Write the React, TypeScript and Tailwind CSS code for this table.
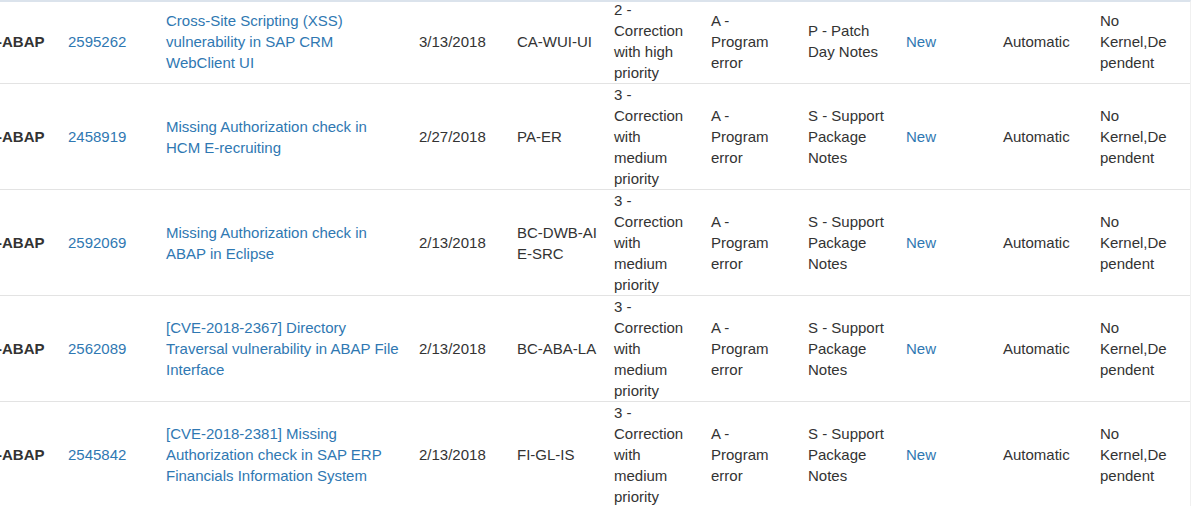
import React from "react";

type Note = {
  id: string;
  title: string;
  date: string;
  component: string;
  priority: string;
  category: string;
  type: string;
};

const notes: Note[] = [
  {
    id: "2595262",
    title: "Cross-Site Scripting (XSS) vulnerability in SAP CRM WebClient UI",
    date: "3/13/2018",
    component: "CA-WUI-UI",
    priority: "2 - Correction with high priority",
    category: "A - Program error",
    type: "P - Patch Day Notes",
  },
  {
    id: "2458919",
    title: "Missing Authorization check in HCM E-recruiting",
    date: "2/27/2018",
    component: "PA-ER",
    priority: "3 - Correction with medium priority",
    category: "A - Program error",
    type: "S - Support Package Notes",
  },
  {
    id: "2592069",
    title: "Missing Authorization check in ABAP in Eclipse",
    date: "2/13/2018",
    component: "BC-DWB-AIE-SRC",
    priority: "3 - Correction with medium priority",
    category: "A - Program error",
    type: "S - Support Package Notes",
  },
  {
    id: "2562089",
    title: "[CVE-2018-2367] Directory Traversal vulnerability in ABAP File Interface",
    date: "2/13/2018",
    component: "BC-ABA-LA",
    priority: "3 - Correction with medium priority",
    category: "A - Program error",
    type: "S - Support Package Notes",
  },
  {
    id: "2545842",
    title: "[CVE-2018-2381] Missing Authorization check in SAP ERP Financials Information System",
    date: "2/13/2018",
    component: "FI-GL-IS",
    priority: "3 - Correction with medium priority",
    category: "A - Program error",
    type: "S - Support Package Notes",
  },
];

export default function App() {
  return (
    <div className="w-[1200px] h-[506px] overflow-hidden bg-white">
      <div className="w-[1191px] h-[506px] border-t-2 border-r border-t-[#dbe3ec] border-r-[#f0f0f0]">
        <table
          className="table-fixed border-collapse -mt-[3px] -ml-[3px] w-[1193px] text-[15px] leading-[21px] text-[#333]"
          style={{ fontFamily: '"Liberation Sans", Arial, sans-serif' }}
        >
          <colgroup>
            <col className="w-[63px]" />
            <col className="w-[98px]" />
            <col className="w-[253px]" />
            <col className="w-[98px]" />
            <col className="w-[97px]" />
            <col className="w-[97px]" />
            <col className="w-[97px]" />
            <col className="w-[98px]" />
            <col className="w-[97px]" />
            <col className="w-[97px]" />
            <col className="w-[98px]" />
          </colgroup>
          <tbody>
            {notes.map((n) => (
              <tr key={n.id} className="border-b border-[#e3e3e3] align-middle">
                <td className="pr-2 font-bold whitespace-nowrap">-ABAP</td>
                <td className="px-2 text-[#2f78b2]">{n.id}</td>
                <td className="px-2 text-[#2f78b2]">{n.title}</td>
                <td className="px-2">{n.date}</td>
                <td className="px-2 break-all">{n.component}</td>
                <td className="px-2">{n.priority}</td>
                <td className="pl-2 pr-[10px]">{n.category}</td>
                <td className="px-2">{n.type}</td>
                <td className="px-2 text-[#2f78b2]">New</td>
                <td className="px-2">Automatic</td>
                <td className="pl-2 pr-[16px] break-words">No Kernel,Dependent</td>
              </tr>
            ))}
          </tbody>
        </table>
      </div>
    </div>
  );
}
